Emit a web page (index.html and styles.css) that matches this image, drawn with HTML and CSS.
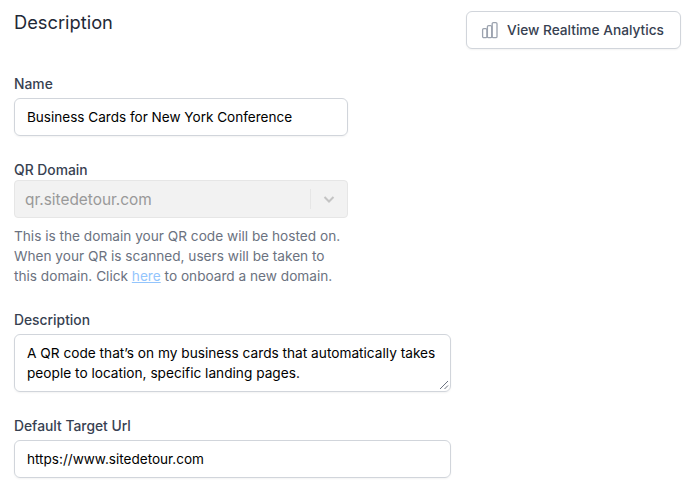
FILE: index.html
```html
<!doctype html>
<html lang="en">
    <head>
        <meta charset="UTF-8" />
        <title>Description</title>
        <link rel="stylesheet" href="styles.css">
    </head>
    <body>
        <div class="header">
            <h2>Description</h2>
            <button class="analytics-btn">
                <svg width="18" height="18" viewBox="0 0 18 18" fill="none" stroke="#9ca3af" stroke-width="1.3">
                    <rect x="1.6" y="7.6" width="4.3" height="9" rx="1.2" />
                    <rect x="6.4" y="4.6" width="4.3" height="12" rx="1.2" />
                    <rect x="11.2" y="1.6" width="4.8" height="15" rx="1.2" />
                </svg>
                View Realtime Analytics
            </button>
        </div>

        <div class="field field-short">
            <label>Name</label>
            <div class="input">Business Cards for New York Conference</div>
        </div>

        <div class="field field-short">
            <label class="label-tight">QR Domain</label>
            <div class="select">
                <span class="select-value">qr.sitedetour.com</span>
                <span class="select-arrow">
                    <svg width="14" height="14" viewBox="0 0 14 14" fill="none" stroke="#c4c4c4" stroke-width="2">
                        <path d="M2.5 5l4.5 4.5L11.5 5" />
                    </svg>
                </span>
            </div>
            <p class="help">
                This is the domain your QR code will be hosted on.<br />
                When your QR is scanned, users will be taken to<br />
                this domain. Click <a href="#">here</a> to onboard a new domain.
            </p>
        </div>

        <div class="field field-wide">
            <label>Description</label>
            <div class="textarea">
                A QR code that’s on my business cards that automatically takes<br />
                people to location, specific landing pages.
                <svg class="grip" width="10" height="10" viewBox="0 0 10 10" fill="none" stroke="#6b7280" stroke-width="1">
                    <path d="M1 9l8-8M5.5 9L9 5.5" />
                </svg>
            </div>
        </div>

        <div class="field field-wide">
            <label>Default Target Url</label>
            <div class="input">https://www.sitedetour.com</div>
        </div>
    </body>
</html>
```

FILE: styles.css
```css
body {
    font-family: "Inter", "Liberation Sans", sans-serif;
    font-size: 14px;
    margin: 0;
    padding: 0 10px 0 14px;
    background: #fff;
    color: #000;
    overflow: hidden;
}
.header {
    display: flex;
    justify-content: space-between;
    align-items: flex-start;
    height: 74px;
}
h2 {
    font-size: 18.3px;
    font-weight: 400;
    line-height: 24px;
    margin: 10px 0 0 0;
    color: #1f2937;
}
.analytics-btn {
    display: flex;
    align-items: center;
    gap: 8px;
    width: 215px;
    height: 38px;
    margin-top: 11px;
    padding: 0 0 0 14px;
    background: #fff;
    border: 1px solid #d1d5db;
    border-radius: 6px;
    box-shadow: 0 1px 2px rgba(0, 0, 0, 0.05);
    font-family: inherit;
    font-size: 13.7px;
    font-weight: 500;
    color: #374151;
}
.field {
    margin-bottom: 24px;
}
.field-short {
    width: 334px;
}
.field-wide {
    width: 437px;
}
label {
    display: block;
    font-size: 13.85px;
    font-weight: 500;
    line-height: 20px;
    margin-bottom: 4px;
    color: #374151;
}
.label-tight {
    margin-bottom: 0;
}
.input {
    box-sizing: border-box;
    height: 38px;
    padding: 0 12px;
    font-size: 13.55px;
    line-height: 36px;
    border: 1px solid #d1d5db;
    border-radius: 6px;
    box-shadow: 0 1px 2px rgba(0, 0, 0, 0.05);
}
.select {
    box-sizing: border-box;
    display: flex;
    align-items: center;
    justify-content: space-between;
    height: 38px;
    padding-left: 10px;
    background: #f2f2f2;
    border: 1px solid #e6e6e6;
    border-radius: 4px;
}
.select-value {
    font-size: 15.4px;
    color: #999;
}
.select-arrow {
    display: flex;
    align-items: center;
    justify-content: center;
    width: 36px;
    height: 20px;
    border-left: 1px solid #e6e6e6;
}
.help {
    margin: 8px 0 0 0;
    font-size: 13.65px;
    line-height: 20px;
    color: #6b7280;
}
.help a {
    color: #93c5fd;
}
.textarea {
    box-sizing: border-box;
    position: relative;
    height: 58px;
    padding: 8px 12px;
    font-size: 13.68px;
    line-height: 20px;
    border: 1px solid #d1d5db;
    border-radius: 6px;
    box-shadow: 0 1px 2px rgba(0, 0, 0, 0.05);
}
.grip {
    position: absolute;
    right: 1px;
    bottom: 1px;
}
```
